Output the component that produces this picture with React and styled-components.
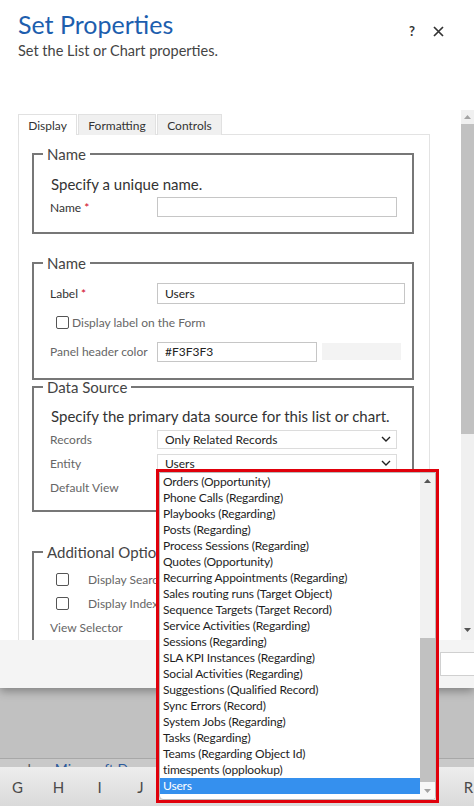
import styled, { createGlobalStyle } from "styled-components";

const GlobalStyle = createGlobalStyle`
  html, body {
    margin: 0;
    padding: 0;
  }
  body {
    font-family: Lato, "Open Sans", sans-serif;
    background: #c1c1c1;
    color: #333;
  }
`;

const Page = styled.div`
  position: relative;
  width: 474px;
  height: 806px;
  overflow: hidden;
  display: flex;
  flex-direction: column;
`;

const Dialog = styled.div`
  position: relative;
  z-index: 1;
  height: 688px;
  flex: none;
  display: flex;
  flex-direction: column;
  background: #fff;
  box-shadow: 0 3px 9px rgba(0, 0, 0, 0.35);
`;

const Header = styled.header`
  height: 110px;
  flex: none;
  box-sizing: border-box;
  padding: 8px 18px 0;
  display: flex;
  justify-content: space-between;
  align-items: flex-start;
`;

const Title = styled.h1`
  margin: 0;
  font-size: 25px;
  line-height: 33px;
  font-weight: 400;
  color: #1d5eae;
`;

const Subtitle = styled.p`
  margin: 1px 0 0;
  font-size: 14.5px;
  line-height: 18px;
  color: #444;
`;

const HeaderActions = styled.div`
  display: flex;
  align-items: center;
  gap: 18px;
  margin-top: 15px;
  margin-right: 12px;
`;

const HelpMark = styled.span`
  font-size: 13px;
  font-weight: 700;
  color: #333;
`;

const Body = styled.div`
  flex: 1;
  min-height: 0;
  display: flex;
`;

const Scroller = styled.div`
  flex: 1;
  overflow: hidden;
  padding: 4px 0 0 18px;
`;

const TabRow = styled.div`
  display: flex;
`;

const Tab = styled.div`
  position: relative;
  z-index: 1;
  width: ${(p) => p.$w}px;
  height: 21px;
  box-sizing: border-box;
  margin-bottom: -1px;
  margin-right: 1px;
  font-size: 12px;
  line-height: 21px;
  text-align: center;
  color: #333;
  border: 1px solid #e1e1e1;
  border-bottom: none;
  background: ${(p) => (p.$active ? "#fff" : "#f0f0f0")};
`;

const Panel = styled.div`
  width: 412px;
  box-sizing: border-box;
  border: 1px solid #e3e3e3;
  padding: 9px 15px 40px 13px;
  display: flex;
  flex-direction: column;
`;

const Group = styled.fieldset`
  margin: ${(p) => p.$gap || 0}px 0 0;
  min-width: 0;
  border: 2px solid #777;
  padding: 0 ${(p) => p.$padRight ?? 15}px ${(p) => p.$padBottom ?? 12}px 16px;
`;

const Legend = styled.legend`
  margin-left: -7px;
  padding: 0 4px;
  font-size: 15px;
  line-height: 20px;
  color: #444;
`;

const Intro = styled.p`
  margin: ${(p) => p.$top ?? 10}px 0 ${(p) => p.$bottom ?? 1}px 1px;
  font-size: 15px;
  line-height: 20px;
  color: #333;
  white-space: nowrap;
`;

const Row = styled.div`
  height: ${(p) => p.$h || 24}px;
  display: flex;
  align-items: center;
  margin-top: ${(p) => p.$top || 0}px;
`;

const Label = styled.span`
  width: 107px;
  flex: none;
  font-size: 12px;
  color: ${(p) => (p.$strong ? "#333" : "#666")};
`;

const Required = styled.span`
  color: #d0021b;
  margin-left: 3px;
`;

const TextField = styled.input`
  width: ${(p) => p.$w}px;
  height: ${(p) => p.$h || 20}px;
  box-sizing: border-box;
  margin: 0;
  padding: 0 7px;
  border: 1px solid #c6c6c6;
  font-family: Lato, "Open Sans", sans-serif;
  font-size: 12px;
  color: #222;
  background: #fff;
  outline: none;
`;

const Swatch = styled.div`
  width: 79px;
  height: 17px;
  margin-left: 5px;
  background: #f3f3f3;
`;

const Select = styled.div`
  width: ${(p) => p.$w}px;
  height: 19px;
  box-sizing: border-box;
  padding: 0 5px 0 7px;
  border: 1px solid #dcdcdc;
  display: flex;
  align-items: center;
  justify-content: space-between;
  font-size: 12px;
  color: #222;
`;

const Check = styled.span`
  width: 13px;
  height: 13px;
  flex: none;
  box-sizing: border-box;
  border: 1px solid #555;
  border-radius: 2px;
  background: #fff;
  margin-left: 6px;
  margin-right: ${(p) => p.$gap ?? 3}px;
`;

const CheckText = styled.span`
  font-size: 12px;
  color: #666;
  white-space: nowrap;
`;

const ScrollBar = styled.div`
  width: 13px;
  flex: none;
  display: flex;
  flex-direction: column;
  background: #f0f0f0;
`;

const ScrollArrow = styled.div`
  height: ${(p) => p.$h || 14}px;
  flex: none;
  display: flex;
  align-items: center;
  justify-content: center;
  background: ${(p) => p.$bg || "transparent"};
`;

const Thumb = styled.div`
  height: ${(p) => p.$h}px;
  flex: none;
  background: #c1c1c1;
`;

const Track = styled.div`
  flex: 1;
`;

const Footer = styled.footer`
  height: 48px;
  flex: none;
  display: flex;
  align-items: center;
  justify-content: flex-end;
  background: #f4f4f4;
`;

const FooterButton = styled.div`
  width: 80px;
  height: 24px;
  margin-right: -46px;
  box-sizing: border-box;
  border: 1px solid #d0d0d0;
  background: #fff;
`;

const Backdrop = styled.div`
  flex: 1;
  display: flex;
  flex-direction: column;
  justify-content: flex-end;
`;

const CrumbRow = styled.div`
  height: 9px;
  overflow: hidden;
  display: flex;
  gap: 24px;
  border-top: 1px solid #a8a8a8;
  background: #c9c9c9;
  padding-top: 3px;
  box-sizing: border-box;
`;

const Crumb = styled.span`
  font-size: 14px;
  line-height: 14px;
  white-space: nowrap;
  color: ${(p) => (p.$link ? "#2c5a9c" : "#555")};
  margin-left: ${(p) => p.$shift || 0}px;
`;

const LetterBar = styled.div`
  height: 39px;
  display: flex;
  align-items: center;
  margin-left: -3px;
  background: linear-gradient(#ededed, #dadada);
`;

const Letter = styled.span`
  width: 41px;
  flex: none;
  text-align: center;
  font-size: 15px;
  color: #4a4a4a;
`;

const ListBox = styled.div`
  position: absolute;
  z-index: 5;
  left: 156px;
  top: 469px;
  width: 283px;
  height: 334px;
  box-sizing: border-box;
  border: 3px solid #e0000b;
`;

const ListInner = styled.div`
  height: 100%;
  box-sizing: border-box;
  display: flex;
  border: 1px solid #b9b9b9;
  border-radius: 0 0 4px 4px;
  background: #fff;
  overflow: hidden;
`;

const Options = styled.ul`
  flex: 1;
  margin: 0;
  padding: 1px 0 0;
  list-style: none;
`;

const Option = styled.li`
  height: 16px;
  padding-left: 3px;
  font-size: 12px;
  letter-spacing: -0.15px;
  line-height: 16px;
  white-space: nowrap;
  color: ${(p) => (p.$selected ? "#fff" : "#1e1e1e")};
  background: ${(p) => (p.$selected ? "#3590ee" : "transparent")};
`;

const ListScroll = styled(ScrollBar)`
  width: 15px;
  background: #f1f1f1;
`;

function Chevron() {
  return (
    <svg width="10" height="6" viewBox="0 0 10 6">
      <polyline points="1,1 5,5 9,1" fill="none" stroke="#222" strokeWidth="1.4" />
    </svg>
  );
}

function CloseIcon() {
  return (
    <svg width="11" height="11" viewBox="0 0 11 11">
      <path d="M1 1 L10 10 M10 1 L1 10" stroke="#333" strokeWidth="1.7" />
    </svg>
  );
}

function Arrow({ down, color = "#a3a3a3" }) {
  return (
    <svg width="7" height="4" viewBox="0 0 7 4">
      <polygon points={down ? "0,0 7,0 3.5,4" : "0,4 7,4 3.5,0"} fill={color} />
    </svg>
  );
}

const relationships = [
  "Orders (Opportunity)",
  "Phone Calls (Regarding)",
  "Playbooks (Regarding)",
  "Posts (Regarding)",
  "Process Sessions (Regarding)",
  "Quotes (Opportunity)",
  "Recurring Appointments (Regarding)",
  "Sales routing runs (Target Object)",
  "Sequence Targets (Target Record)",
  "Service Activities (Regarding)",
  "Sessions (Regarding)",
  "SLA KPI Instances (Regarding)",
  "Social Activities (Regarding)",
  "Suggestions (Qualified Record)",
  "Sync Errors (Record)",
  "System Jobs (Regarding)",
  "Tasks (Regarding)",
  "Teams (Regarding Object Id)",
  "timespents (opplookup)",
  "Users",
];

const letters = ["G", "H", "I", "J", "K", "L", "M", "N", "O", "P", "Q", "R"];

export default function App() {
  return (
    <>
      <GlobalStyle />
      <Page>
        <Dialog>
          <Header>
            <div>
              <Title>Set Properties</Title>
              <Subtitle>Set the List or Chart properties.</Subtitle>
            </div>
            <HeaderActions>
              <HelpMark>?</HelpMark>
              <CloseIcon />
            </HeaderActions>
          </Header>

          <Body>
            <Scroller>
              <TabRow>
                <Tab $w={59} $active>
                  Display
                </Tab>
                <Tab $w={78}>Formatting</Tab>
                <Tab $w={65}>Controls</Tab>
              </TabRow>
              <Panel>
                <Group $padBottom={13}>
                  <Legend>Name</Legend>
                  <Intro>Specify a unique name.</Intro>
                  <Row>
                    <Label $strong>
                      Name<Required>*</Required>
                    </Label>
                    <TextField $w={240} readOnly value="" />
                  </Row>
                </Group>

                <Group $gap={19} $padRight={7} $padBottom={12}>
                  <Legend>Name</Legend>
                  <Row $h={29} $top={6}>
                    <Label $strong>
                      Label<Required>*</Required>
                    </Label>
                    <TextField $w={248} $h={21} readOnly value="Users" />
                  </Row>
                  <Row $h={29}>
                    <Check />
                    <CheckText>Display label on the Form</CheckText>
                  </Row>
                  <Row $h={29}>
                    <Label>Panel header color</Label>
                    <TextField $w={160} readOnly value="#F3F3F3" />
                    <Swatch />
                  </Row>
                </Group>

                <Group $gap={-3} $padBottom={11}>
                  <Legend>Data Source</Legend>
                  <Intro $top={9}>Specify the primary data source for this list or chart.</Intro>
                  <Row>
                    <Label>Records</Label>
                    <Select $w={240}>
                      Only Related Records
                      <Chevron />
                    </Select>
                  </Row>
                  <Row>
                    <Label>Entity</Label>
                    <Select $w={240}>
                      Users
                      <Chevron />
                    </Select>
                  </Row>
                  <Row>
                    <Label>Default View</Label>
                    <Select $w={240}>
                      Users
                      <Chevron />
                    </Select>
                  </Row>
                </Group>

                <Group $gap={30}>
                  <Legend>Additional Options</Legend>
                  <Row $top={5}>
                    <Check $gap={19} />
                    <CheckText>Display Search Box</CheckText>
                  </Row>
                  <Row>
                    <Check $gap={19} />
                    <CheckText>Display Index</CheckText>
                  </Row>
                  <Row>
                    <Label>View Selector</Label>
                  </Row>
                </Group>
              </Panel>
            </Scroller>

            <ScrollBar>
              <ScrollArrow $bg="#f0f0f0">
                <Arrow />
              </ScrollArrow>
              <Thumb $h={310} />
              <Track />
              <ScrollArrow $h={20}>
                <Arrow down color="#555" />
              </ScrollArrow>
            </ScrollBar>
          </Body>

          <Footer>
            <FooterButton />
          </Footer>
        </Dialog>

        <Backdrop>
          <CrumbRow>
            <Crumb $shift={-30}>Advanced</Crumb>
            <Crumb $link>Microsoft Dynamics 365</Crumb>
          </CrumbRow>
          <LetterBar>
            {letters.map((l) => (
              <Letter key={l}>{l}</Letter>
            ))}
          </LetterBar>
        </Backdrop>

        <ListBox>
          <ListInner>
            <Options>
              {relationships.map((r) => (
                <Option key={r} $selected={r === "Users"}>
                  {r}
                </Option>
              ))}
            </Options>
            <ListScroll>
              <ScrollArrow $h={16}>
                <Arrow color="#555" />
              </ScrollArrow>
              <Track />
              <Thumb $h={144} />
              <ScrollArrow $h={17} $bg="#f7f7f7">
                <Arrow down />
              </ScrollArrow>
            </ListScroll>
          </ListInner>
        </ListBox>
      </Page>
    </>
  );
}
